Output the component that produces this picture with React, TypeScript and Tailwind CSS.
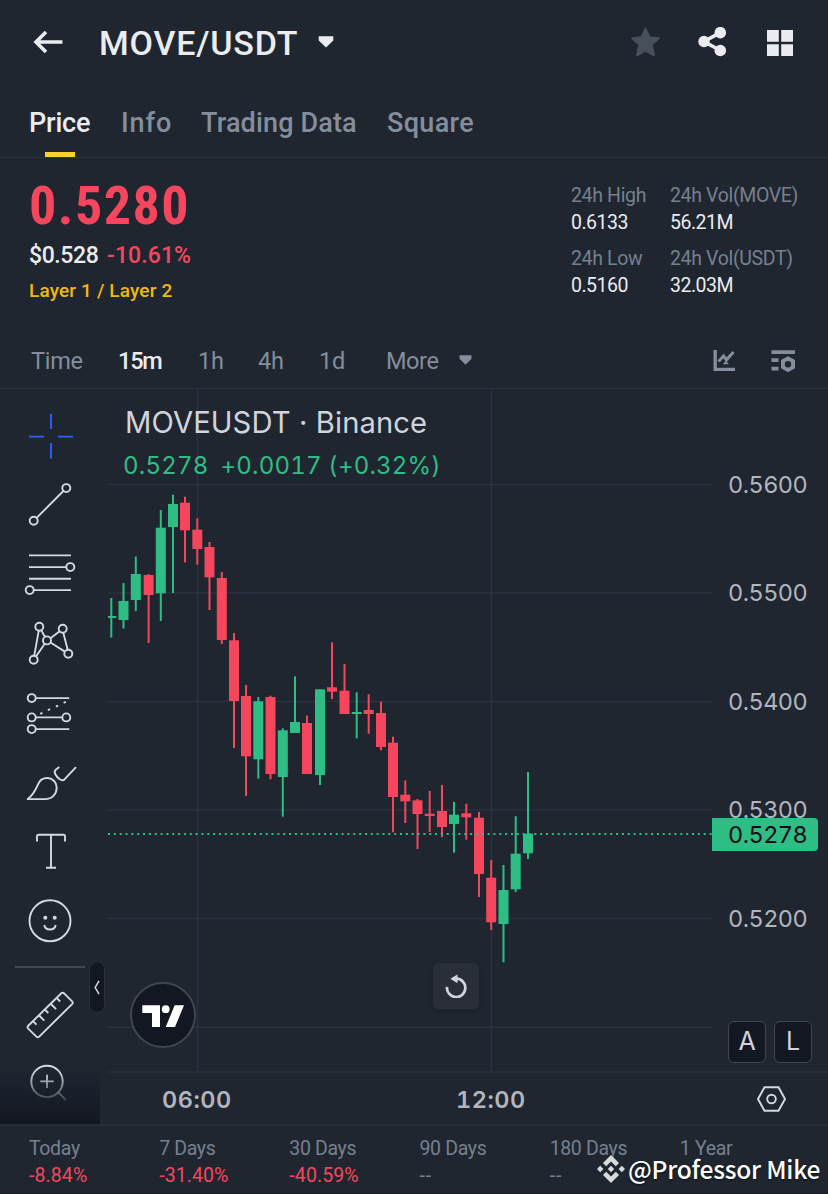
import type { ReactNode } from 'react'

interface Candle {
  x: number
  high: number
  low: number
  top: number
  bottom: number
  up: boolean
}

interface Performance {
  label: string
  value: string
}

const toCandle = ([x, high, low, top, bottom, up]: number[]): Candle => ({
  x,
  high,
  low,
  top,
  bottom,
  up: up === 1,
})

// x, high, low, body top, body bottom, direction
const candles: Candle[] = [
  [111.3, 598, 637.5, 616, 618, 1],
  [123.5, 583, 628.5, 601, 620, 1],
  [135.8, 556.5, 611, 574, 600, 1],
  [148.6, 574, 643, 575, 595, 0],
  [160.8, 510, 621, 527.7, 593.3, 1],
  [173, 494.7, 593, 504, 527, 1],
  [185, 496.7, 562.3, 502.7, 530.3, 0],
  [197.3, 518.3, 564.7, 529.7, 549, 0],
  [209.5, 542, 610, 547, 577.3, 0],
  [221.8, 572, 644, 578, 640, 0],
  [234, 633, 748, 640.3, 701, 0],
  [246, 685, 796, 696, 756.3, 0],
  [258.3, 697, 778.7, 701.3, 759.3, 1],
  [270.5, 695.7, 779.3, 697, 774, 0],
  [282.8, 728.3, 816.7, 730.3, 777, 1],
  [295, 676.3, 733, 722, 733, 1],
  [307, 715.7, 774, 723, 774, 0],
  [320, 689.3, 785, 689.3, 775, 1],
  [332, 642.3, 699, 687.3, 691.7, 0],
  [344.5, 664, 714, 690.7, 714, 0],
  [356.7, 692.3, 738.3, 712, 714, 1],
  [368.7, 694.3, 733.7, 710, 714, 0],
  [381, 701.7, 750.3, 713, 747, 0],
  [393, 736.7, 832.3, 742.7, 797, 0],
  [405.3, 780.3, 823, 794.7, 801.3, 0],
  [417.5, 799, 849, 800.3, 814, 0],
  [429.7, 791, 832, 813.7, 816, 0],
  [442, 785, 837, 811, 827, 0],
  [454, 802, 852.7, 814.7, 824, 1],
  [466.3, 803.7, 839.7, 813.3, 817.3, 0],
  [479, 812, 897, 817.7, 874, 0],
  [491.2, 860, 930, 877.7, 922.3, 0],
  [503.5, 865, 962.3, 890, 924, 1],
  [515.7, 816.3, 892, 853.7, 889.3, 1],
  [528, 772, 859, 833.7, 853.3, 1],
].map(toCandle)

const prices = ['0.5600', '0.5500', '0.5400', '0.5300', '0.5200']

const performance: Performance[] = [
  { label: 'Today', value: '-8.84%' },
  { label: '7 Days', value: '-31.40%' },
  { label: '30 Days', value: '-40.59%' },
  { label: '90 Days', value: '--' },
  { label: '180 Days', value: '--' },
  { label: '1 Year', value: '--' },
]

const tools: ReactNode[] = [
  <path key="cross" stroke="#2962ff" d="M28 5.5v15M28 34.5v15.5M6 28h15M35 28h15" />,
  <g key="trend">
    <circle cx="43.3" cy="10.5" r="4" />
    <circle cx="10.7" cy="43.2" r="4" />
    <path d="M40.4 13.4 13.6 40.3" />
  </g>,
  <g key="fib">
    <path d="M6 8.8h42M6 20.5h37.3M6 32.2h42M10.7 43.5H48" />
    <circle cx="47.3" cy="20.5" r="4" />
    <circle cx="6.7" cy="43.5" r="4" />
  </g>,
  <g key="pattern">
    <circle cx="16.3" cy="11.2" r="4" />
    <circle cx="39.7" cy="13.2" r="4" />
    <circle cx="24" cy="24.8" r="4" />
    <circle cx="10.7" cy="44.2" r="4" />
    <circle cx="45.3" cy="38.2" r="4" />
    <path d="M18.2 14.7l3.9 6.6M15.7 15.2l-4.5 25M13 40.9l8.7-12.8M27.4 22.7l9-6.9M27.5 26.9l14.4 9.1M40.3 17.2l4.4 17" />
  </g>,
  <g key="forecast">
    <circle cx="8.7" cy="13.5" r="4" />
    <circle cx="8.7" cy="32.8" r="4" />
    <circle cx="43.3" cy="32.8" r="4" />
    <circle cx="8.7" cy="44.5" r="4" />
    <path d="M12.7 13.5h33.6M12.7 32.8h26.6M12.7 44.5h33.6" />
    <path d="M17.2 29.3l2.2-1M24.9 25.6l2.2-1M32.9 22l2.2-1M40.6 18.3l2.2-1" />
  </g>,
  <g key="brush" strokeLinejoin="round">
    <path d="M4.7 45.5H22c7.5 0 11.7-5.4 11.7-11.7 0-5.3-4.3-9.4-9.5-9.4-4 0-7.2 2-8.9 5.8C13 35.5 10 41.5 4.7 45.5z" />
    <path d="M36.3 13.5l-3.6 2.7c-1.2 1.1-1.3 2.6-.5 4.2 1 2 2.6 3.9 4.6 5.3 1.8 1.2 3.5 1.2 4.9-.1L53 13.5" />
  </g>,
  <path key="text" d="M14 19v-5.3q0-1.5 1.5-1.5h25q1.5 0 1.5 1.5V19M28 12.2v33M23 45.2h10" />,
  <g key="emoji">
    <circle cx="27" cy="29.2" r="20.5" />
    <path d="M21.3 33.4c1.1 6 10.3 6 11.4 0" />
    <circle cx="22.3" cy="26.2" r="2" fill="#d5d8e2" stroke="none" />
    <circle cx="31.7" cy="26.2" r="2" fill="#d5d8e2" stroke="none" />
  </g>,
]

const ToolButton = ({ children }: { children: ReactNode }) => (
  <button type="button" className="flex h-[69px] w-[102px] items-center justify-center">
    <svg className="h-14 w-14" viewBox="0 .4 56 56" fill="none" stroke="#d5d8e2" strokeWidth={1.9}>
      {children}
    </svg>
  </button>
)

const Header = () => (
  <header className="flex h-[86px] items-center pl-[33px] pr-[35px] text-[#eaecef]">
    <svg className="h-6 w-[31px] -translate-y-px" viewBox="0 0 31 24" fill="none" stroke="currentColor" strokeWidth={3.6}>
      <path d="M13 2 3 12l10 10M3 12h26.5" />
    </svg>
    <h1 className="ml-[35px] text-[34px] font-medium leading-10 tracking-[0.8px]">MOVE/USDT</h1>
    <svg className="ml-5 h-3 w-4 -translate-y-px" viewBox="0 0 16 12" fill="currentColor">
      <path d="M.7.2h14.6v4.4L8 11.5.7 4.6z" />
    </svg>
    <div className="ml-auto flex items-center gap-[37px]">
      <svg className="h-[30px] w-[30px] -translate-y-px" viewBox="0 0 30 30" fill="#474f5b" stroke="#474f5b" strokeWidth={2} strokeLinejoin="round">
        <path d="M14.5 1.6l3.9 8.6 9.4 1-7 6.4L23 28.3l-8.5-4.6L6 28.3l2.2-10.7-7-6.4 9.4-1z" />
      </svg>
      <svg className="h-[30px] w-[30px] -translate-y-px" viewBox="0 0 30 30" fill="currentColor">
        <circle cx="6" cy="14.5" r="5.7" />
        <circle cx="22.3" cy="5.7" r="5.8" />
        <circle cx="22.3" cy="23.5" r="5.8" />
        <path d="M22.3 5.7 6 14.5l16.3 9" fill="none" stroke="currentColor" strokeWidth={3.6} />
      </svg>
      <svg className="ml-[2px] h-[26px] w-[26px]" viewBox="0 0 26 26" fill="currentColor">
        <path d="M0 0h11.8v11.8H0zM14.2 0H26v11.8H14.2zM0 14.2h11.8V26H0zM14.2 14.2H26V26H14.2z" />
      </svg>
    </div>
  </header>
)

const Tabs = () => (
  <nav className="flex h-[72px] border-b border-[#2b3139] pl-[29px] text-left text-[27px] font-medium leading-[74px] text-[#848e9c]">
    <button type="button" className="relative h-[71px] w-[92px] text-left tracking-[-0.2px] text-[#eaecef]">
      Price
      <span className="absolute bottom-0 left-4 h-[5px] w-[30px] bg-[#f8d12f]" />
    </button>
    <button type="button" className="h-[71px] w-[80px] text-left tracking-[0.9px]">
      Info
    </button>
    <button type="button" className="h-[71px] w-[186px] text-left tracking-[0.15px]">
      Trading Data
    </button>
    <button type="button" className="h-[71px] text-left tracking-[0.35px]">
      Square
    </button>
  </nav>
)

const Stat = ({ label, value }: { label: string; value: string }) => (
  <div>
    <div className="tracking-[-0.35px] text-[#76808f]">{label}</div>
    <div className="tracking-[-0.5px] text-[#eaecef]">{value}</div>
  </div>
)

const Summary = () => (
  <section className="flex h-[172px] justify-between pl-[29px] pr-[30px]">
    <div className="pt-[18px]">
      <div className="text-[54px] font-bold leading-[60px] tracking-[1.5px] text-[#f6465d] [font-stretch:75%]">0.5280</div>
      <div className="mt-[5px] flex text-[23px] font-medium leading-[30px]">
        <span className="w-[78px] tracking-[-0.4px] text-[#eaecef]">$0.528</span>
        <span className="tracking-[0.1px] text-[#f6465d]">-10.61%</span>
      </div>
      <div className="mt-2 text-[19px] font-medium leading-6 tracking-[0.15px] text-[#f0b90b]">Layer 1 / Layer 2</div>
    </div>
    <div className="flex pt-[24px] text-[19.5px] leading-[27px]">
      <div className="flex w-[99px] flex-col gap-[9px]">
        <Stat label="24h High" value="0.6133" />
        <Stat label="24h Low" value="0.5160" />
      </div>
      <div className="flex w-[128px] flex-col gap-[9px] whitespace-nowrap">
        <Stat label="24h Vol(MOVE)" value="56.21M" />
        <Stat label="24h Vol(USDT)" value="32.03M" />
      </div>
    </div>
  </section>
)

const Intervals = () => (
  <div className="flex h-[59px] items-center border-b border-[#2b3139] pl-[31px] pr-[32px] pt-[5px] text-[23.5px] tracking-[-0.3px] text-[#848e9c]">
    <span className="w-[87px]">Time</span>
    <span className="w-[80px] font-medium tracking-[-1.2px] text-[#eaecef]">15m</span>
    <span className="w-[60px]">1h</span>
    <span className="w-[61px]">4h</span>
    <span className="w-[67px]">1d</span>
    <span className="w-[73px] tracking-[-0.4px]">More</span>
    <svg className="h-[10px] w-[13px] -translate-y-[2px]" viewBox="0 0 13 10" fill="currentColor">
      <path d="M.5.2h12v3.6l-6 6-6-6z" />
    </svg>
    <svg className="ml-auto h-[22px] w-[22px] -translate-y-px" viewBox="0 0 22 22" fill="none" stroke="#848e9c" strokeWidth={3.4}>
      <path d="M2.2 0v19.4H22" />
      <path d="M5.5 11.5l5-5.5 3 3.8L20.5 2" strokeWidth={3} />
      <path d="M12.8 10.5l3 3.8h-6z" fill="#848e9c" stroke="none" />
    </svg>
    <svg className="ml-9 h-6 w-[25px] -translate-y-px" viewBox="0 0 25 24" fill="#848e9c">
      <path d="M.5 1.2H24V5H.5zM.5 9.3h7v3.8h-7zM.5 17.7h7v3.8h-7z" />
      <path fillRule="evenodd" d="M17 7.2l7 3.9v8.1l-7 4-7-4v-8.1zM17 12a3.2 3.2 0 1 0 0 6.4 3.2 3.2 0 0 0 0-6.4z" />
    </svg>
  </div>
)

const Toolbar = () => (
  <aside className="relative flex w-[108px] flex-col pt-[13px]">
    <div className="pointer-events-none absolute bottom-0 left-0 h-[56px] w-[100px] bg-linear-to-b from-transparent to-[#131722]" />
    {tools.map((tool, i) => (
      <ToolButton key={i}>{tool}</ToolButton>
    ))}
    <div className="mb-3 ml-[15px] mt-[12px] h-[2px] w-[70px] bg-[#434651]" />
    <ToolButton>
      <path
        strokeLinejoin="round"
        d="M38.3 6.7q1.4-1.3 2.8 0l8 8q1.3 1.4 0 2.8L16.2 50q-1.4 1.3-2.8 0l-8.2-8q-1.3-1.4 0-2.8z"
      />
      <path d="M10.2 34.7l3.3 3.3M16.1 28.9l5.2 5.2M22 23.1l3.3 3.3M27.9 17.4l5.2 5.2M33.8 11.6l3.3 3.3" />
    </ToolButton>
    <ToolButton>
      <g stroke="url(#fade)">
        <circle cx="24" cy="25.8" r="15.7" />
        <path d="M17.3 25.8h13.4M24 19.1v13.4M35.3 36.8l7.4 7.4" />
      </g>
      <defs>
        <linearGradient id="fade" gradientUnits="userSpaceOnUse" x1="0" y1="24" x2="0" y2="46">
          <stop stopColor="#d5d8e2" />
          <stop offset="1" stopColor="#7d818c" />
        </linearGradient>
      </defs>
    </ToolButton>
    <button
      type="button"
      className="absolute left-[89px] top-[572px] flex h-[52px] w-4 items-center justify-center rounded-lg border-[1.5px] border-[#2a2e39] bg-[#131722]"
    >
      <svg className="h-[15px] w-[6px]" viewBox="0 0 6 15" fill="none" stroke="#d5d8e2" strokeWidth={1.5}>
        <path d="M5 .8 1.2 7.5 5 14.2" />
      </svg>
    </button>
  </aside>
)

const Plot = () => (
  <div className="relative h-[682px] w-[604px]">
    <svg className="block h-[682px] w-[604px]" viewBox="108 389 604 682">
      <path
        d="M108 484.5h604M108 593h604M108 701.5h604M108 810h604M108 918.5h604M108 1027.3h604M197.5 389v682M491.5 389v682"
        stroke="#2d323d"
        strokeWidth={1.5}
      />
      {candles.map((c) => (
        <g key={c.x} fill={c.up ? '#2ebd85' : '#f6465d'}>
          <rect x={c.x - 1} y={c.high} width={2} height={c.low - c.high} />
          <rect x={c.x - 5} y={c.top} width={10} height={c.bottom - c.top} />
        </g>
      ))}
      <path d="M108 834h604" stroke="#2ebd85" strokeWidth={2} strokeDasharray="2 3.84" />
    </svg>

    <div className="absolute left-[17px] top-[14px] whitespace-nowrap font-['Inter',sans-serif]">
      <div className="text-[29.2px] leading-[39px] tracking-[0.1px] text-[#d1d4dc]">MOVEUSDT · Binance</div>
      <div className="-ml-[2px] mt-2 flex gap-3 text-[24px] tabular-nums leading-8 tracking-[0.2px] text-[#2ebd85]">
        <span>0.5278</span>
        <span>+0.0017 (+0.32%)</span>
      </div>
    </div>

    <div className="absolute left-[22px] top-[593px] h-[66px] w-[66px] rounded-full border-2 border-[#434651] bg-[#131722]">
      <svg className="h-full w-full" viewBox="0 0 62 62" fill="#fff">
        <path d="M10.3 21.3H28V43h-8V29h-9.7zM42.7 21.3H52L43 43h-9.3z" />
        <circle cx="33.7" cy="25.2" r="3.9" />
      </svg>
    </div>

    <button
      type="button"
      className="absolute left-[325px] top-[574px] flex h-[46px] w-[46px] items-center justify-center rounded-md bg-[#2a2e39] shadow-md"
    >
      <svg className="h-6 w-6" viewBox="0 0 24 24" fill="none" stroke="#d1d4dc" strokeWidth={2.7}>
        <path d="M3 12.8a9.2 9.2 0 1 0 9.2-8.2h-1.5" />
        <path d="M6.3 4.8 13.5.4v8.8z" fill="#d1d4dc" stroke="none" />
      </svg>
    </button>
  </div>
)

const PriceAxis = () => (
  <div className="relative flex h-[682px] w-[116px] flex-col pt-[41px] font-['Inter',sans-serif] text-[23.5px] tabular-nums tracking-[-0.55px] text-[#b2b5be]">
    {prices.map((price) => (
      <div key={price} className="flex h-[108.6px] shrink-0 items-center pl-4">
        {price}
      </div>
    ))}
    <div className="mt-[48px] flex gap-2 pl-4 text-[25px] tracking-normal text-[#d1d4dc]">
      <button type="button" className="h-[42px] w-[38px] rounded-md border-[1.5px] border-[#434651] bg-[#131722]">
        A
      </button>
      <button type="button" className="h-[42px] w-[38px] rounded-md border-[1.5px] border-[#434651] bg-[#131722]">
        L
      </button>
    </div>
    <div className="absolute left-0 top-[429px] h-[33px] w-[106px] rounded-r bg-[#2ebd85] pl-4 leading-[33px] text-[#0c0e12]">
      0.5278
    </div>
  </div>
)

const TimeAxis = () => (
  <div className="flex h-[53px] items-center border-t-2 border-[#272c36] font-['Inter',sans-serif] text-[23.5px] font-semibold tabular-nums tracking-[0.5px] text-[#b2b5be]">
    <span className="ml-[54px] w-[294px] pt-[2px]">06:00</span>
    <span className="pt-[2px]">12:00</span>
    <svg className="ml-auto mr-[42px] h-[26px] w-[29px]" viewBox="0 0 29 26" fill="none" stroke="#d5d8e2" strokeWidth={1.9}>
      <path d="M7.5 1.3h14L28 13l-6.5 11.7h-14L1 13z" />
      <circle cx="14.5" cy="13" r="4.3" />
    </svg>
  </div>
)

const Footer = () => (
  <footer className="relative h-[70px] border-t-2 border-b border-b-[#191421] border-t-[#272c36] pl-[29px]">
    <div className="grid w-[781px] grid-cols-6 pt-[9px] text-[19.5px] leading-[27px] text-[#76808f]">
      {performance.map(({ label, value }) => (
        <div key={label}>
          <div className="tracking-[-0.35px]">{label}</div>
          <div className={value === '--' ? 'tracking-[0.9px]' : 'tracking-[0.1px] text-[#f6465d]'}>{value}</div>
        </div>
      ))}
    </div>
    <div className="absolute left-[597px] top-[23px] flex items-center">
      <svg className="h-7 w-7" viewBox="0 0 28 28" fill="#d9dadc">
        <path d="M14 0l8 8-3.2 3.2L14 6.4l-4.8 4.8L6 8zM14 28l-8-8 3.2-3.2 4.8 4.8 4.8-4.8L22 20zM3.2 10.8 6.4 14l-3.2 3.2L0 14zM24.8 10.8 28 14l-3.2 3.2-3.2-3.2zM14 10.8l3.2 3.2-3.2 3.2-3.2-3.2z" />
      </svg>
      <span className="ml-[3px] whitespace-nowrap font-['Noto_Sans_CJK_SC',sans-serif] text-[24.5px] font-medium leading-10 tracking-[-0.22px] text-white [text-shadow:0_1px_2px_#000a]">
        @Professor Mike
      </span>
    </div>
  </footer>
)

const App = () => (
  <main className="h-[1194px] w-[828px] overflow-hidden bg-[#1f2630] font-['Roboto',sans-serif]">
    <Header />
    <Tabs />
    <Summary />
    <Intervals />
    <div className="flex h-[735px]">
      <Toolbar />
      <div className="w-[720px]">
        <div className="flex">
          <Plot />
          <PriceAxis />
        </div>
        <TimeAxis />
      </div>
    </div>
    <Footer />
  </main>
)

export default App
